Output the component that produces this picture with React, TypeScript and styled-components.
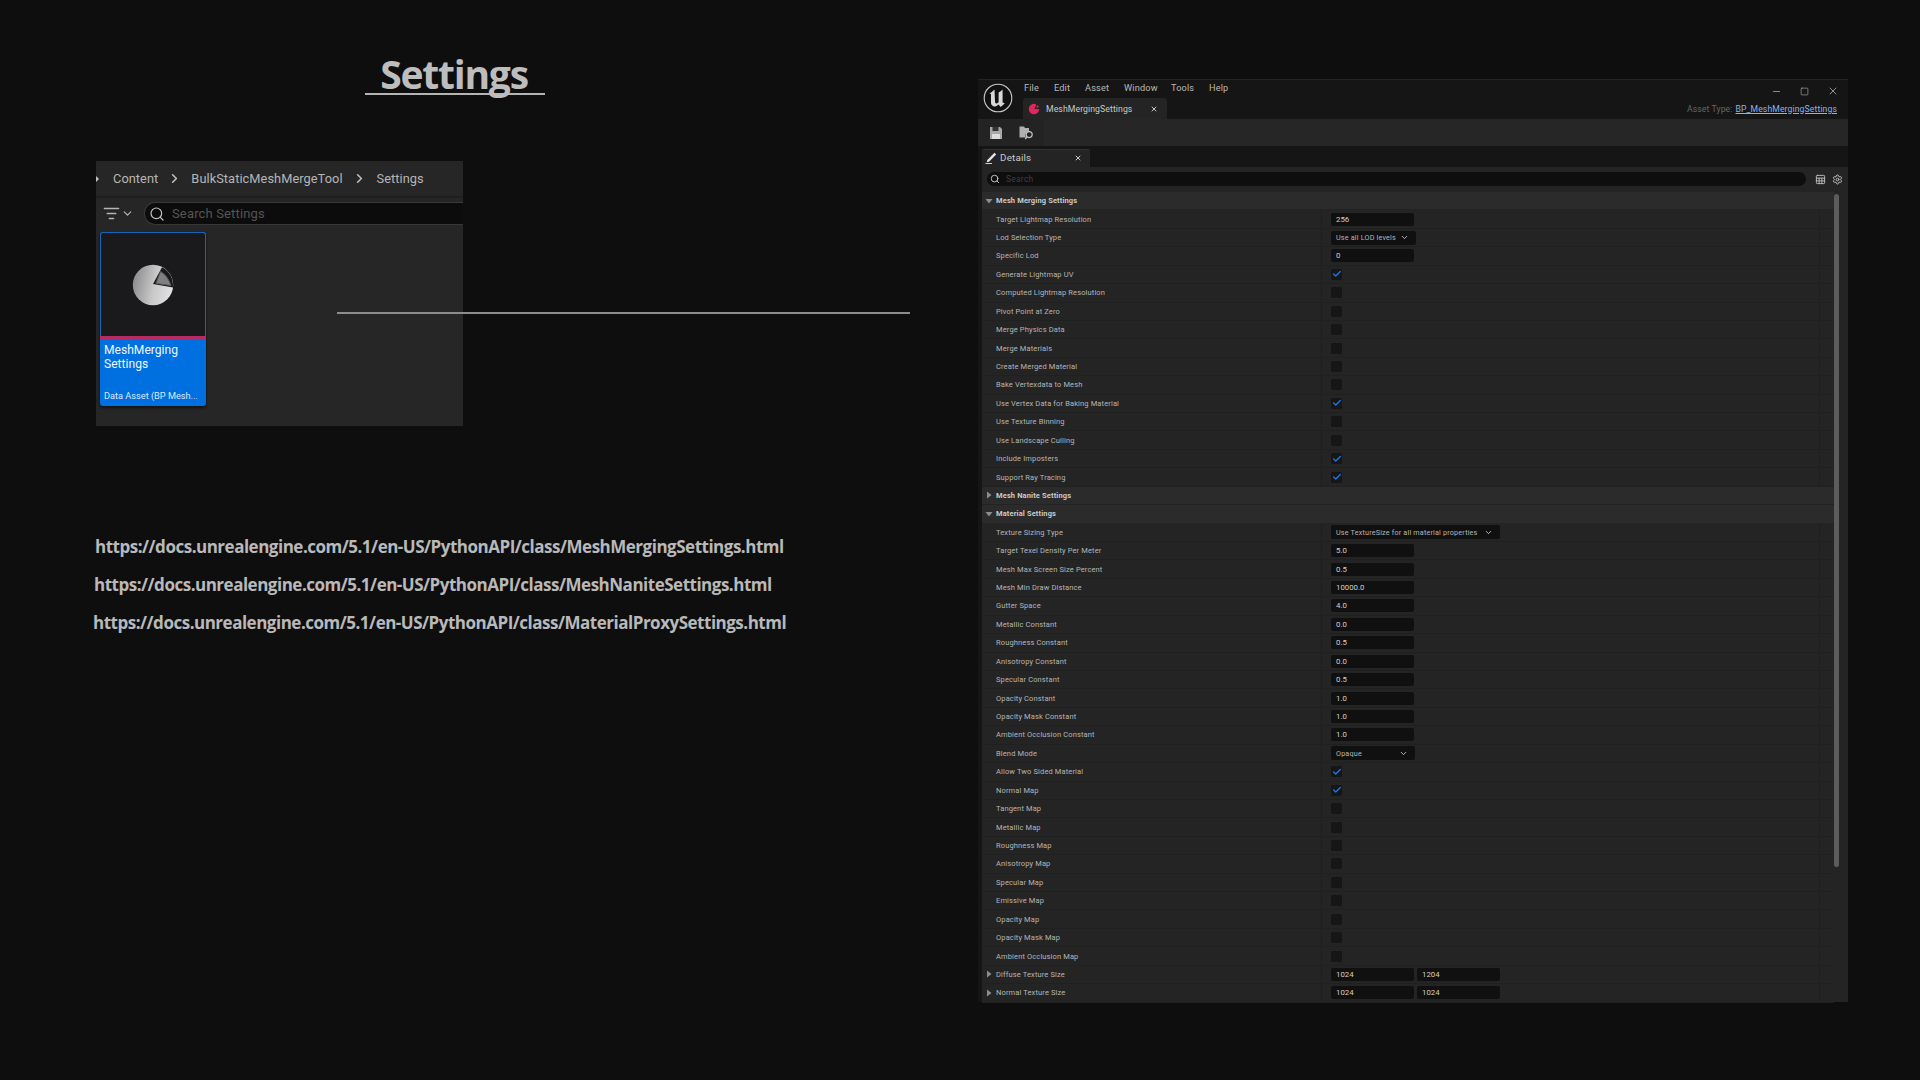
import React from 'react';
import styled, {createGlobalStyle} from 'styled-components';
import {Check, ChevronDown, ChevronRight, ListFilter, Minus, Search, Settings, Sheet, Square, X} from 'lucide-react';

const GlobalStyle = createGlobalStyle`
  html, body {
    margin: 0;
    padding: 0;
    width: 1920px;
    height: 1080px;
    overflow: hidden;
    background: #0e0e0f;
    font-family: Roboto, 'Liberation Sans', sans-serif;
  }
`;

type DetailRow =
  | {kind: 'header'; label: string; open: boolean}
  | {kind: 'text'; label: string; value: string}
  | {kind: 'select'; label: string; value: string; width: number; gap?: number}
  | {kind: 'check'; label: string; on?: boolean}
  | {kind: 'pair'; label: string; a: string; b: string};

const rows: DetailRow[] = [
  {kind: 'header', label: 'Mesh Merging Settings', open: true},
  {kind: 'text', label: 'Target Lightmap Resolution', value: '256'},
  {kind: 'select', label: 'Lod Selection Type', value: 'Use all LOD levels', width: 85},
  {kind: 'text', label: 'Specific Lod', value: '0'},
  {kind: 'check', label: 'Generate Lightmap UV', on: true},
  {kind: 'check', label: 'Computed Lightmap Resolution'},
  {kind: 'check', label: 'Pivot Point at Zero'},
  {kind: 'check', label: 'Merge Physics Data'},
  {kind: 'check', label: 'Merge Materials'},
  {kind: 'check', label: 'Create Merged Material'},
  {kind: 'check', label: 'Bake Vertexdata to Mesh'},
  {kind: 'check', label: 'Use Vertex Data for Baking Material', on: true},
  {kind: 'check', label: 'Use Texture Binning'},
  {kind: 'check', label: 'Use Landscape Culling'},
  {kind: 'check', label: 'Include Imposters', on: true},
  {kind: 'check', label: 'Support Ray Tracing', on: true},
  {kind: 'header', label: 'Mesh Nanite Settings', open: false},
  {kind: 'header', label: 'Material Settings', open: true},
  {kind: 'select', label: 'Texture Sizing Type', value: 'Use TextureSize for all material properties', width: 169},
  {kind: 'text', label: 'Target Texel Density Per Meter', value: '5.0'},
  {kind: 'text', label: 'Mesh Max Screen Size Percent', value: '0.5'},
  {kind: 'text', label: 'Mesh Min Draw Distance', value: '10000.0'},
  {kind: 'text', label: 'Gutter Space', value: '4.0'},
  {kind: 'text', label: 'Metallic Constant', value: '0.0'},
  {kind: 'text', label: 'Roughness Constant', value: '0.5'},
  {kind: 'text', label: 'Anisotropy Constant', value: '0.0'},
  {kind: 'text', label: 'Specular Constant', value: '0.5'},
  {kind: 'text', label: 'Opacity Constant', value: '1.0'},
  {kind: 'text', label: 'Opacity Mask Constant', value: '1.0'},
  {kind: 'text', label: 'Ambient Occlusion Constant', value: '1.0'},
  {kind: 'select', label: 'Blend Mode', value: 'Opaque', width: 84},
  {kind: 'check', label: 'Allow Two Sided Material', on: true},
  {kind: 'check', label: 'Normal Map', on: true},
  {kind: 'check', label: 'Tangent Map'},
  {kind: 'check', label: 'Metallic Map'},
  {kind: 'check', label: 'Roughness Map'},
  {kind: 'check', label: 'Anisotropy Map'},
  {kind: 'check', label: 'Specular Map'},
  {kind: 'check', label: 'Emissive Map'},
  {kind: 'check', label: 'Opacity Map'},
  {kind: 'check', label: 'Opacity Mask Map'},
  {kind: 'check', label: 'Ambient Occlusion Map'},
  {kind: 'pair', label: 'Diffuse Texture Size', a: '1024', b: '1204'},
  {kind: 'pair', label: 'Normal Texture Size', a: '1024', b: '1024'}
];

const menuItems = [
  {label: 'File', width: 30},
  {label: 'Edit', width: 31},
  {label: 'Asset', width: 39},
  {label: 'Window', width: 47},
  {label: 'Tools', width: 38},
  {label: 'Help', width: 30}
];

const docLinks = [
  {href: 'https://docs.unrealengine.com/5.1/en-US/PythonAPI/class/MeshMergingSettings.html', indent: 95, gap: 0},
  {href: 'https://docs.unrealengine.com/5.1/en-US/PythonAPI/class/MeshNaniteSettings.html', indent: 94, gap: 13},
  {href: 'https://docs.unrealengine.com/5.1/en-US/PythonAPI/class/MaterialProxySettings.html', indent: 93, gap: 13}
];

const Page = styled.div`
  position: relative;
  display: flex;
  width: 1920px;
  height: 1080px;
  background: #0e0e0f;
`;

const LeftColumn = styled.section`
  width: 978px;
  flex: none;
`;

const TitleBlock = styled.h1`
  width: 180px;
  height: 38px;
  margin: 0 0 66px 365px;
  padding-top: 55px;
  box-sizing: content-box;
  border-bottom: 2px solid #b4b4b4;
  color: #bdbdbd;
  font: 700 39px/37px 'Open Sans', sans-serif;
  letter-spacing: -1.2px;
  text-align: center;
  text-indent: -2px;
`;

const BrowserPanel = styled.div`
  width: 367px;
  height: 265px;
  margin-left: 96px;
  display: flex;
  flex-direction: column;
  background: #262626;
  overflow: hidden;
`;

const PathBar = styled.div`
  height: 35px;
  flex: none;
  display: flex;
  align-items: center;
  background: #262626;
  border-bottom: 2px solid #1e1e1e;
  color: #b5b5b5;
  font-size: 12.8px;
  letter-spacing: 0.06px;
`;

const RootArrow = styled.span`
  width: 0;
  height: 0;
  margin-right: 14px;
  border-left: 3px solid #c0c0c0;
  border-top: 3px solid transparent;
  border-bottom: 3px solid transparent;
`;

const Crumb = styled.span``;

const CrumbChevron = styled(ChevronRight)<{$after: number}>`
  margin: 0 ${p => p.$after}px 0 9px;
  color: #bdbdbd;
  width: 15px;
  height: 15px;
  stroke-width: 2.6;
`;

const FilterRow = styled.div`
  height: 27px;
  flex: none;
  display: flex;
  align-items: center;
  padding: 4px 0 0 7px;
  box-sizing: border-box;
  color: #b4b4b4;
`;

const FilterChevron = styled(ChevronDown)`
  width: 13px;
  height: 13px;
  margin-left: 1px;
  stroke-width: 2.2;
`;

const BrowserSearch = styled.div`
  flex: 1;
  height: 21px;
  display: flex;
  align-items: center;
  margin-left: 10px;
  padding-left: 4px;
  background: #0c0c0c;
  border: 1px solid #383838;
  border-right: none;
  border-radius: 11px 0 0 11px;
  color: #555;
  font-size: 13px;
  letter-spacing: 0.15px;
`;

const BrowserCaption = styled.span`
  margin-left: 7px;
`;

const CardGrid = styled.div`
  padding: 7px 0 0 4px;
`;

const AssetCard = styled.div`
  width: 106px;
  height: 174px;
  display: flex;
  flex-direction: column;
  border-radius: 3px;
  overflow: hidden;
  background: #0070e0;
  box-shadow: 0 2px 3px rgba(0, 0, 0, 0.55);
`;

const CardThumb = styled.div`
  height: 104px;
  flex: none;
  display: flex;
  align-items: center;
  justify-content: center;
  box-sizing: border-box;
  background: #1a1a1c;
  border: 1px solid #1467b8;
  border-bottom: none;
  border-radius: 3px 3px 0 0;
`;

const CardStripe = styled.div`
  height: 3px;
  flex: none;
  background: #b82a63;
`;

const CardTitle = styled.div`
  padding: 4px 0 0 4px;
  color: #f2f7ff;
  font-size: 12.1px;
  line-height: 14px;
  flex: 1;
`;

const CardSub = styled.div`
  padding: 0 0 4px 4px;
  color: #dbeaff;
  font-size: 9.2px;
  line-height: 12px;
  white-space: nowrap;
`;

const DocLink = styled.div<{$indent: number; $gap: number}>`
  margin: ${p => p.$gap}px 0 0 ${p => p.$indent}px;
  color: #b9b9b9;
  font: 700 17px/25px 'Open Sans', sans-serif;
  letter-spacing: -0.49px;
  white-space: nowrap;
`;

const LinkList = styled.div`
  margin-top: 108px;
`;

const ConnectorLine = styled.div`
  position: absolute;
  left: 337px;
  top: 312px;
  width: 573px;
  height: 2px;
  background: #8c8c8c;
`;

const WindowColumn = styled.section`
  padding-top: 79px;
`;

const EditorWindow = styled.div`
  width: 870px;
  height: 923px;
  display: flex;
  flex-direction: column;
  background: #151515;
  border-top: 1px solid #242424;
  box-sizing: border-box;
`;

const TitleBar = styled.div`
  height: 39px;
  flex: none;
  display: flex;
  background: #151515;
`;

const LogoSlot = styled.div`
  width: 45px;
  flex: none;
  display: flex;
  align-items: flex-start;
  padding: 3px 0 0 5px;
  box-sizing: border-box;
`;

const TitleMain = styled.div`
  flex: 1;
  display: flex;
  flex-direction: column;
  min-width: 0;
`;

const MenuBar = styled.div`
  height: 18px;
  flex: none;
  display: flex;
  align-items: center;
  padding: 0 0 3px 1px;
  box-sizing: border-box;
  color: #b8b8b8;
  font-size: 9.2px;
  letter-spacing: 0.15px;
`;

const MenuItem = styled.span<{$width: number}>`
  width: ${p => p.$width}px;
`;

const TabRow = styled.div`
  height: 21px;
  flex: none;
  display: flex;
  align-items: stretch;
  justify-content: space-between;
`;

const AssetTab = styled.div`
  width: 144px;
  display: flex;
  align-items: center;
  padding-left: 5px;
  box-sizing: border-box;
  background: #242424;
  border-radius: 3px 3px 0 0;
  color: #c8c8c8;
  font-size: 8.7px;
  letter-spacing: 0.08px;
`;

const TabCaption = styled.span`
  margin-left: 6px;
  flex: 1;
`;

const TabClose = styled(X)<{$shift: number}>`
  width: 8px;
  height: 8px;
  margin-right: ${p => p.$shift}px;
  stroke-width: 3;
  color: #c8c8c8;
`;

const WindowControls = styled.div`
  position: absolute;
  right: 81px;
  top: 85px;
  display: flex;
  align-items: center;
  gap: 18px;
  color: #b5b5b5;
`;

const AssetType = styled.div`
  display: flex;
  align-items: center;
  padding-right: 11px;
  color: #666;
  font-size: 8.6px;
  letter-spacing: 0.13px;
`;

const AssetLink = styled.span`
  margin-left: 3px;
  color: #8db2e6;
  text-decoration: underline;
`;

const Toolbar = styled.div`
  height: 27px;
  flex: none;
  display: flex;
  align-items: center;
  background: #262626;
`;

const ToolbarGroup = styled.div`
  width: 66px;
  height: 100%;
  display: flex;
  align-items: center;
  gap: 16px;
  padding-left: 11px;
  box-sizing: border-box;
  background: #232323;
`;

const DetailsStrip = styled.div`
  height: 21px;
  flex: none;
  display: flex;
  align-items: flex-start;
  padding: 3px 0 0 4px;
  box-sizing: border-box;
  background: #151515;
`;

const DetailsTab = styled.div`
  width: 108px;
  height: 18px;
  display: flex;
  align-items: center;
  padding: 0 0 2px 3px;
  box-sizing: border-box;
  background: #242424;
  border-top: 1px solid #123a66;
  border-radius: 2px 2px 0 0;
  color: #c8c8c8;
  font-size: 9.8px;
  letter-spacing: 0.2px;
`;

const DetailsCaption = styled.span`
  margin-left: 3px;
  flex: 1;
`;

const DetailsBody = styled.div`
  flex: 1;
  display: flex;
  flex-direction: column;
  margin-left: 4px;
  background: #242424;
  min-height: 0;
`;

const SearchRow = styled.div`
  height: 25px;
  flex: none;
  display: flex;
  align-items: center;
  padding: 0 0 1px 5px;
  box-sizing: border-box;
  background: #242424;
`;

const DetailSearch = styled.div`
  width: 819px;
  height: 14px;
  flex: none;
  display: flex;
  align-items: center;
  padding-left: 3px;
  box-sizing: border-box;
  border-radius: 7px;
  background: #0e0e0e;
  color: #3f3f3f;
  font-size: 8.4px;
  letter-spacing: 0.3px;
`;

const SearchCaption = styled.span`
  margin-left: 6px;
`;

const SearchTools = styled.div`
  display: flex;
  align-items: center;
  gap: 6px;
  margin-left: 9px;
  color: #c4c4c4;
`;

const DetailsList = styled.div`
  flex: 1;
  position: relative;
  width: 852px;
  background: #1d1d1d;
`;

const RowShell = styled.div<{$header?: boolean}>`
  height: 18.43px;
  box-sizing: border-box;
  display: flex;
  align-items: center;
  background: ${p => (p.$header ? '#2b2b2b' : '#242424')};
  border-bottom: 1px solid ${p => (p.$header ? '#232323' : '#202020')};
`;

const Disclosure = styled.span`
  width: 14px;
  flex: none;
  display: flex;
  justify-content: center;
`;

const RowLabel = styled.div<{$header?: boolean}>`
  width: 339px;
  flex: none;
  display: flex;
  align-items: center;
  height: 100%;
  border-right: ${p => (p.$header ? '0' : '1px solid #1f1f1f')};
  color: ${p => (p.$header ? '#cacaca' : '#b6b6b6')};
  font-size: 7.5px;
  font-weight: ${p => (p.$header ? 700 : 400)};
  letter-spacing: 0.13px;
  white-space: nowrap;
`;

const LabelText = styled.span`
  flex: 1;
`;

const ValueCell = styled.div`
  flex: 1;
  display: flex;
  align-items: center;
  height: 100%;
  gap: 3px;
  padding-left: 9px;
  box-sizing: border-box;
  border-right: 1px solid #1f1f1f;
  margin-right: 14px;
`;

const NumberField = styled.div`
  width: 83px;
  height: 13px;
  display: flex;
  align-items: center;
  padding-left: 5px;
  box-sizing: border-box;
  background: #101010;
  border-radius: 2px;
  color: #d0d0d0;
  font-size: 7.8px;
`;

const SelectField = styled.div<{$width: number}>`
  width: ${p => p.$width}px;
  height: 14px;
  display: flex;
  align-items: center;
  justify-content: space-between;
  padding: 0 7px 0 5px;
  box-sizing: border-box;
  background: #101010;
  border-radius: 2px;
  color: #b6b6b6;
  font-size: 7.2px;
  letter-spacing: 0.19px;
  white-space: nowrap;
`;

const CheckBox = styled.div`
  width: 11px;
  height: 11px;
  display: flex;
  align-items: center;
  justify-content: center;
  background: #161616;
  border-radius: 1.5px;
  color: #1d78e6;
`;

const Scrollbar = styled.div`
  position: absolute;
  right: -5px;
  top: 2px;
  width: 5px;
  height: 673px;
  background: #5c5c5c;
  border-radius: 3px;
`;

const Triangle = ({open}: {open: boolean}) => (
  <svg width="8" height="8" viewBox="0 0 8 8">
    <path d={open ? 'M0.5 2 H7.5 L4 6.5 Z' : 'M2 0.5 V7.5 L6.5 4 Z'} fill="#8d8d8d" />
  </svg>
);

const UnrealLogo = () => (
  <svg width="30" height="30" viewBox="0 0 30 30">
    <circle cx="15" cy="15" r="13.8" fill="#111" stroke="#c9c9c9" strokeWidth="1.1" />
    <path
      d="M6.5 10.5 C8 9.5 9.5 8.5 11.5 6.5 L12 18.6 C12 20.2 13 20.8 14.2 20.2 L15.6 19.2 V9.5 C17 8.6 18.4 7.6 19.6 6.4 V19.6 L21.8 20.2 C20.5 21.5 19 22.8 17.6 24 L15.6 21.4 C14 22.8 12.4 23.6 10.8 23.4 C9 23.1 8 21.6 8 19.6 V11 Z"
      fill="#d8d8d8"
    />
  </svg>
);

const AssetBadge = () => (
  <svg width="12" height="12" viewBox="0 0 12 12">
    <path d="M6 0.8A5.2 5.2 0 1 0 11.2 6H6.4L8.2 2 7.6 1Z" fill="#e0265f" />
    <circle cx="9.6" cy="3.6" r="1.1" fill="#e0265f" />
  </svg>
);

const SaveIcon = () => (
  <svg width="14" height="14" viewBox="0 0 14 14">
    <path d="M1 1H11L13 3V13H1Z" fill="#a8a8a8" />
    <rect x="3.5" y="1" width="6" height="4" fill="#333" />
    <rect x="3" y="8" width="8" height="5" fill="#dcdcdc" />
  </svg>
);

const BrowseIcon = () => (
  <svg width="15" height="15" viewBox="0 0 15 15">
    <path d="M0.5 1.5H5L6 3H10V6.5Q7 6.5 6.5 9.5 6.3 11 7 12.5H0.5Z" fill="#b0b0b0" />
    <circle cx="10.2" cy="9.6" r="3" fill="none" stroke="#c8c8c8" strokeWidth="1.1" />
    <path d="M8 12 6.2 14" stroke="#c8c8c8" strokeWidth="1.2" />
  </svg>
);

const PencilIcon = () => (
  <svg width="12" height="12" viewBox="0 0 12 12">
    <path d="M9.5 0.8 11.2 2.5 4 9.7 1.8 10.2 2.3 8Z" fill="#e4e4e4" />
    <path d="M0.5 11.5H7" stroke="#e4e4e4" strokeWidth="0.9" />
  </svg>
);

const PieIcon = () => (
  <svg width="42" height="42" viewBox="0 0 42 42">
    <defs>
      <linearGradient id="pieFill" x1="0" y1="0.3" x2="1" y2="0.5">
        <stop offset="0" stopColor="#8a8a8a" />
        <stop offset="0.55" stopColor="#c8c8c8" />
        <stop offset="1" stopColor="#e2e2e2" />
      </linearGradient>
    </defs>
    <circle cx="21" cy="21" r="20.2" fill="url(#pieFill)" />
    <path d="M30 3.2A20.2 20.2 0 0 1 41 23.5L21 20Z" fill="#1a1a1c" />
    <path d="M28.5 7.5Q35.5 11.5 39 21.5L24 19.4Z" fill="#7f7f7f" stroke="#5a5a5a" strokeWidth="1" />
  </svg>
);

const DetailRowView = ({row}: {row: DetailRow}) => {
  if (row.kind === 'header') {
    return (
      <RowShell $header>
        <RowLabel $header>
          <Disclosure>
            <Triangle open={row.open} />
          </Disclosure>
          <LabelText>{row.label}</LabelText>
        </RowLabel>
      </RowShell>
    );
  }
  return (
    <RowShell>
      <RowLabel>
        <Disclosure>{row.kind === 'pair' && <Triangle open={false} />}</Disclosure>
        <LabelText>{row.label}</LabelText>
      </RowLabel>
      <ValueCell>
        {row.kind === 'text' && <NumberField>{row.value}</NumberField>}
        {row.kind === 'select' && (
          <SelectField $width={row.width}>
            {row.value}
            <ChevronDown size={9} strokeWidth={2.4} color="#c8c8c8" />
          </SelectField>
        )}
        {row.kind === 'check' && (
          <CheckBox>{row.on && <Check size={10} strokeWidth={3.2} />}</CheckBox>
        )}
        {row.kind === 'pair' && (
          <>
            <NumberField>{row.a}</NumberField>
            <NumberField>{row.b}</NumberField>
          </>
        )}
      </ValueCell>
    </RowShell>
  );
};

export default function App() {
  return (
    <Page>
      <GlobalStyle />
      <LeftColumn>
        <TitleBlock>Settings</TitleBlock>
        <BrowserPanel>
          <PathBar>
            <RootArrow />
            <Crumb>Content</Crumb>
            <CrumbChevron $after={9} />
            <Crumb>BulkStaticMeshMergeTool</Crumb>
            <CrumbChevron $after={10} />
            <Crumb>Settings</Crumb>
          </PathBar>
          <FilterRow>
            <ListFilter size={17} strokeWidth={2} />
            <FilterChevron />
            <BrowserSearch>
              <Search size={16} strokeWidth={1.8} color="#c4c4c4" />
              <BrowserCaption>Search Settings</BrowserCaption>
            </BrowserSearch>
          </FilterRow>
          <CardGrid>
            <AssetCard>
              <CardThumb>
                <PieIcon />
              </CardThumb>
              <CardStripe />
              <CardTitle>
                MeshMerging
                <br />
                Settings
              </CardTitle>
              <CardSub>Data Asset (BP Mesh...</CardSub>
            </AssetCard>
          </CardGrid>
        </BrowserPanel>
        <LinkList>
          {docLinks.map(link => (
            <DocLink key={link.href} $indent={link.indent} $gap={link.gap}>
              {link.href}
            </DocLink>
          ))}
        </LinkList>
      </LeftColumn>
      <ConnectorLine />
      <WindowColumn>
        <EditorWindow>
          <TitleBar>
            <LogoSlot>
              <UnrealLogo />
            </LogoSlot>
            <TitleMain>
              <MenuBar>
                {menuItems.map(item => (
                  <MenuItem key={item.label} $width={item.width}>
                    {item.label}
                  </MenuItem>
                ))}
              </MenuBar>
              <TabRow>
                <AssetTab>
                  <AssetBadge />
                  <TabCaption>MeshMergingSettings</TabCaption>
                  <TabClose $shift={9} />
                </AssetTab>
                <AssetType>
                  Asset Type:
                  <AssetLink>BP_MeshMergingSettings</AssetLink>
                </AssetType>
              </TabRow>
            </TitleMain>
          </TitleBar>
          <Toolbar>
            <ToolbarGroup>
              <SaveIcon />
              <BrowseIcon />
            </ToolbarGroup>
          </Toolbar>
          <DetailsStrip>
            <DetailsTab>
              <PencilIcon />
              <DetailsCaption>Details</DetailsCaption>
              <TabClose $shift={8} />
            </DetailsTab>
          </DetailsStrip>
          <DetailsBody>
            <SearchRow>
              <DetailSearch>
                <Search size={10} strokeWidth={2.2} color="#cfcfcf" />
                <SearchCaption>Search</SearchCaption>
              </DetailSearch>
              <SearchTools>
                <Sheet size={11} strokeWidth={2} />
                <Settings size={11} strokeWidth={2} />
              </SearchTools>
            </SearchRow>
            <DetailsList>
              {rows.map(row => (
                <DetailRowView key={row.label} row={row} />
              ))}
              <Scrollbar />
            </DetailsList>
          </DetailsBody>
        </EditorWindow>
      </WindowColumn>
      <WindowControls>
        <Minus size={11} strokeWidth={1.6} />
        <Square size={9} strokeWidth={1.6} />
        <X size={12} strokeWidth={1.6} />
      </WindowControls>
    </Page>
  );
}
